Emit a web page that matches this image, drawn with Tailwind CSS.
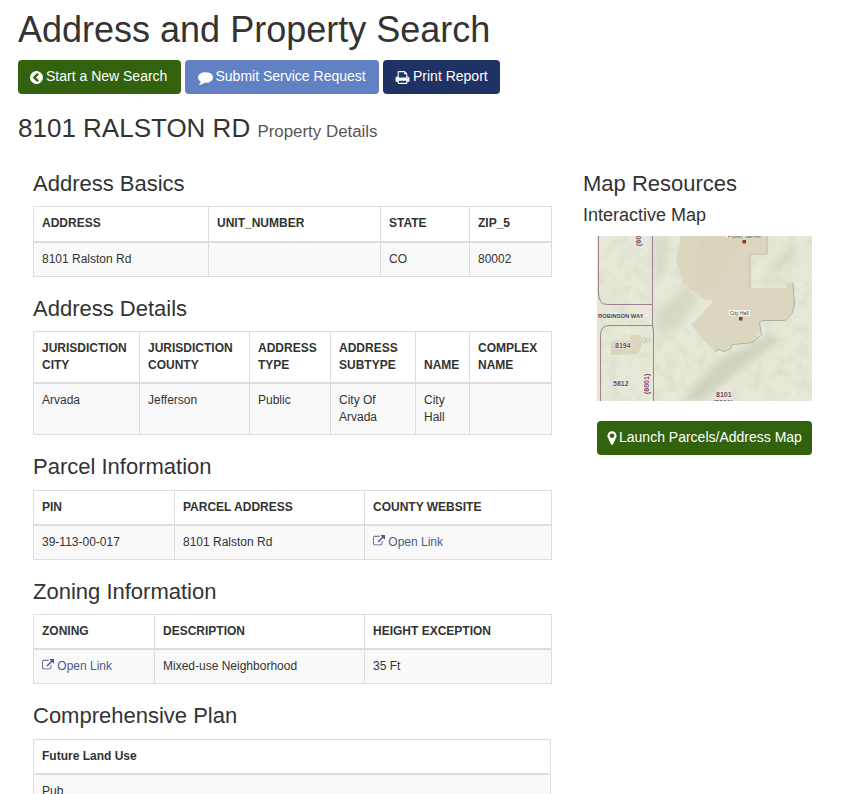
<!DOCTYPE html>
<html lang="en">
<head>
    <meta charset="UTF-8">
    <meta name="viewport" content="width=device-width, initial-scale=1.0">
    <title>Address and Property Search</title>
    <script src="https://cdn.jsdelivr.net/npm/@tailwindcss/browser@4"></script>
</head>
<body class="h-screen overflow-hidden bg-white font-['Liberation_Sans',Arial,sans-serif] text-sm leading-[1.42857] text-[#333]">
<div class="px-[18px]">
    <h1 class="pt-[10px] pb-[10px] text-[36px] leading-[39.6px] font-normal">Address and Property Search</h1>
    <div class="flex gap-1">
        <a class="flex h-[34px] w-[163px] items-center gap-[2px] rounded bg-[#33620f] pl-[13px] pt-px text-white">
            <svg class="-ml-[2px] w-[15px] h-[15px]" viewBox="0 0 1792 1792" fill="currentColor"><path d="M1037 1395l102-102q19-19 19-45t-19-45l-307-307 307-307q19-19 19-45t-19-45l-102-102q-19-19-45-19t-45 19l-454 454q-19 19-19 45t19 45l454 454q19 19 45 19t45-19zm627-499q0 209-103 385.500t-279.500 279.500-385.500 103-385.500-103-279.500-279.500-103-385.500 103-385.500 279.500-279.500 385.500-103 385.500 103 279.500 279.500 103 385.500z"/></svg>
            Start a New Search
        </a>
        <a class="flex h-[34px] w-[194px] items-center gap-[2.5px] rounded bg-[#6281c3] pl-[13px] pt-px text-white">
            <svg class="w-[15px] h-[15px]" viewBox="0 0 1792 1792" fill="currentColor"><path d="M1792 896q0 174-120 321.500t-326 233-450 85.500q-70 0-145-8-198 175-460 242-49 14-114 22-17 2-30.500-9t-17.500-29v-1q-3-4-.5-12t2-10 4.500-9.500l6-9 7-8.500 8-9q7-8 31-34.500t34.500-38 31-39.500 32.500-51 27-59 26-76q-157-89-247.500-220t-90.500-281q0-130 71-248.500t191-204.500 286-136.500 348-50.500q244 0 450 85.500t326 233 120 321.500z"/></svg>
            Submit Service Request
        </a>
        <a class="flex h-[34px] w-[117px] items-center gap-[3px] rounded bg-[#1f3264] pl-[13px] pt-px text-white">
            <svg class="-ml-px w-[15px] h-[15px]" viewBox="0 0 1792 1792" fill="currentColor"><path d="M448 1536h896v-256h-896v256zm0-640h896v-384h-160q-40 0-68-28t-28-68v-160h-640v640zm1152 64q0-26-19-45t-45-19-45 19-19 45 19 45 45 19 45-19 19-45zm128 0v416q0 13-9.500 22.500t-22.500 9.500h-224v160q0 40-28 68t-68 28h-960q-40 0-68-28t-28-68v-160h-224q-13 0-22.500-9.500t-9.500-22.500v-416q0-79 56.500-135.500t135.500-56.500h64v-544q0-40 28-68t68-28h672q40 0 88 20t76 48l152 152q28 28 48 76t20 88v256h64q79 0 135.500 56.500t56.500 135.500z"/></svg>
            Print Report
        </a>
    </div>
    <h2 class="mt-[19px] text-[26px] leading-[30px] font-normal">8101 RALSTON RD <small class="text-[16.9px] leading-none text-[#555]">Property Details</small></h2>

    <div class="mt-[9px] flex">
        <div class="w-[534px] pl-[15px] shrink-0">
            <h3 class="mt-5 mb-[10px] text-[22px] leading-[24.2px] font-normal">Address Basics</h3>
            <table class="w-[518px] table-fixed border-collapse text-xs leading-[17.14px] mb-5">
                <colgroup><col class="w-[175px]"><col class="w-[172px]"><col class="w-[89px]"><col class="w-[82px]"></colgroup>
                <thead class="bg-white text-left">
                    <tr>
                        <th class="border border-b-2 border-[#ddd] p-2 pb-[9px] align-bottom">ADDRESS</th>
                        <th class="border border-b-2 border-[#ddd] p-2 pb-[9px] align-bottom">UNIT_NUMBER</th>
                        <th class="border border-b-2 border-[#ddd] p-2 pb-[9px] align-bottom">STATE</th>
                        <th class="border border-b-2 border-[#ddd] p-2 pb-[9px] align-bottom">ZIP_5</th>
                    </tr>
                </thead>
                <tbody class="bg-[#f9f9f9]">
                    <tr>
                        <td class="border border-[#ddd] p-2 align-top">8101 Ralston Rd</td>
                        <td class="border border-[#ddd] p-2 align-top"></td>
                        <td class="border border-[#ddd] p-2 align-top">CO</td>
                        <td class="border border-[#ddd] p-2 align-top">80002</td>
                    </tr>
                </tbody>
            </table>

            <h3 class="mt-5 mb-[10px] text-[22px] leading-[24.2px] font-normal">Address Details</h3>
            <table class="w-[518px] table-fixed border-collapse text-xs leading-[17.14px] mb-5">
                <colgroup><col class="w-[106px]"><col class="w-[110px]"><col class="w-[81px]"><col class="w-[85px]"><col class="w-[54px]"><col class="w-[82px]"></colgroup>
                <thead class="bg-white text-left">
                    <tr>
                        <th class="border border-b-2 border-[#ddd] p-2 pb-[7px] align-bottom">JURISDICTION CITY</th>
                        <th class="border border-b-2 border-[#ddd] p-2 pb-[7px] align-bottom">JURISDICTION COUNTY</th>
                        <th class="border border-b-2 border-[#ddd] p-2 pb-[7px] align-bottom">ADDRESS TYPE</th>
                        <th class="border border-b-2 border-[#ddd] p-2 pb-[7px] align-bottom">ADDRESS SUBTYPE</th>
                        <th class="border border-b-2 border-[#ddd] p-2 pb-[7px] align-bottom">NAME</th>
                        <th class="border border-b-2 border-[#ddd] p-2 pb-[7px] align-bottom">COMPLEX NAME</th>
                    </tr>
                </thead>
                <tbody class="bg-[#f9f9f9]">
                    <tr>
                        <td class="border border-[#ddd] p-2 align-top">Arvada</td>
                        <td class="border border-[#ddd] p-2 align-top">Jefferson</td>
                        <td class="border border-[#ddd] p-2 align-top">Public</td>
                        <td class="border border-[#ddd] p-2 align-top">City Of Arvada</td>
                        <td class="border border-[#ddd] p-2 align-top">City Hall</td>
                        <td class="border border-[#ddd] p-2 align-top"></td>
                    </tr>
                </tbody>
            </table>

            <h3 class="mt-5 mb-[11px] text-[22px] leading-[24.2px] font-normal">Parcel Information</h3>
            <table class="w-[518px] table-fixed border-collapse text-xs leading-[17.14px] mb-5">
                <colgroup><col class="w-[141px]"><col class="w-[190px]"><col class="w-[187px]"></colgroup>
                <thead class="bg-white text-left">
                    <tr>
                        <th class="border border-b-2 border-[#ddd] p-2 align-bottom">PIN</th>
                        <th class="border border-b-2 border-[#ddd] p-2 align-bottom">PARCEL ADDRESS</th>
                        <th class="border border-b-2 border-[#ddd] p-2 align-bottom">COUNTY WEBSITE</th>
                    </tr>
                </thead>
                <tbody class="bg-[#f9f9f9]">
                    <tr>
                        <td class="border border-[#ddd] p-2 align-top">39-113-00-017</td>
                        <td class="border border-[#ddd] p-2 align-top">8101 Ralston Rd</td>
                        <td class="border border-[#ddd] p-2 align-top">
                            <a class="text-[#4d5c8a]"><svg class="inline-block w-3 h-3 align-[-1px]" viewBox="0 0 1792 1792" fill="currentColor"><path d="M1408 928v320q0 119-84.500 203.500t-203.500 84.500h-832q-119 0-203.500-84.500t-84.500-203.500v-832q0-119 84.500-203.500t203.500-84.500h704q14 0 23 9t9 23v64q0 14-9 23t-23 9h-704q-66 0-113 47t-47 113v832q0 66 47 113t113 47h832q66 0 113-47t47-113v-320q0-14 9-23t23-9h64q14 0 23 9t9 23zm384-864v512q0 26-19 45t-45 19-45-19l-176-176-652 652q-10 10-23 10t-23-10l-114-114q-10-10-10-23t10-23l652-652-176-176q-19-19-19-45t19-45 45-19h512q26 0 45 19t19 45z"/></svg> Open Link</a>
                        </td>
                    </tr>
                </tbody>
            </table>

            <h3 class="mt-5 mb-[9px] text-[22px] leading-[24.2px] font-normal">Zoning Information</h3>
            <table class="w-[518px] table-fixed border-collapse text-xs leading-[17.14px] mb-5">
                <colgroup><col class="w-[121px]"><col class="w-[210px]"><col class="w-[187px]"></colgroup>
                <thead class="bg-white text-left">
                    <tr>
                        <th class="border border-b-2 border-[#ddd] p-2 align-bottom">ZONING</th>
                        <th class="border border-b-2 border-[#ddd] p-2 align-bottom">DESCRIPTION</th>
                        <th class="border border-b-2 border-[#ddd] p-2 align-bottom">HEIGHT EXCEPTION</th>
                    </tr>
                </thead>
                <tbody class="bg-[#f9f9f9]">
                    <tr>
                        <td class="border border-[#ddd] p-2 align-top">
                            <a class="text-[#4d5c8a]"><svg class="inline-block w-3 h-3 align-[-1px]" viewBox="0 0 1792 1792" fill="currentColor"><path d="M1408 928v320q0 119-84.500 203.500t-203.500 84.500h-832q-119 0-203.500-84.500t-84.500-203.500v-832q0-119 84.500-203.500t203.500-84.500h704q14 0 23 9t9 23v64q0 14-9 23t-23 9h-704q-66 0-113 47t-47 113v832q0 66 47 113t113 47h832q66 0 113-47t47-113v-320q0-14 9-23t23-9h64q14 0 23 9t9 23zm384-864v512q0 26-19 45t-45 19-45-19l-176-176-652 652q-10 10-23 10t-23-10l-114-114q-10-10-10-23t10-23l652-652-176-176q-19-19-19-45t19-45 45-19h512q26 0 45 19t19 45z"/></svg> Open Link</a>
                        </td>
                        <td class="border border-[#ddd] p-2 align-top">Mixed-use Neighborhood</td>
                        <td class="border border-[#ddd] p-2 align-top">35 Ft</td>
                    </tr>
                </tbody>
            </table>

            <h3 class="mt-5 mb-[11px] text-[22px] leading-[24.2px] font-normal">Comprehensive Plan</h3>
            <table class="w-[518px] table-fixed border-collapse text-xs leading-[17.14px] mb-5">
                <thead class="bg-white text-left">
                    <tr><th class="border border-b-2 border-[#ddd] p-2 align-bottom">Future Land Use</th></tr>
                </thead>
                <tbody class="bg-[#f9f9f9]">
                    <tr><td class="border border-[#ddd] p-2 align-top">Pub</td></tr>
                </tbody>
            </table>
        </div>

        <div class="ml-[31px] w-[229px] shrink-0">
            <h3 class="mt-5 mb-[9px] text-[22px] leading-[24.2px] font-normal">Map Resources</h3>
            <h4 class="mb-[11px] text-lg leading-[20px] font-normal">Interactive Map</h4>
            <div class="ml-[14px] w-[215px]">
                <svg class="block w-[215px] h-[165px]" viewBox="0 0 215 165" font-family="Liberation Sans, Arial, sans-serif">
                    <defs>
                        <filter id="soft" x="-20%" y="-20%" width="140%" height="140%"><feGaussianBlur stdDeviation="3"/></filter>
                        <filter id="softer" x="-20%" y="-20%" width="140%" height="140%"><feGaussianBlur stdDeviation="0.5"/></filter>
                        <filter id="mottle" x="0" y="0" width="100%" height="100%">
                            <feTurbulence type="fractalNoise" baseFrequency="0.09" numOctaves="3" seed="4"/>
                            <feColorMatrix values="0 0 0 0 0.66 0 0 0 0 0.67 0 0 0 0 0.54 0 0 0 1 -0.4"/>
                        </filter>
                    </defs>
                    <rect width="215" height="165" fill="#e6e8d8"/>
                    <rect width="215" height="165" filter="url(#mottle)"/>
                    <g filter="url(#soft)">
                        <polygon points="56,0 72,0 70,30 58,50" fill="#d8dbc6"/>
                        <polygon points="60,75 90,50 100,65 80,90 62,100" fill="#d6d9c4"/>
                        <polygon points="84,165 120,125 175,98 182,104 135,140 105,165" fill="#d0d4be"/>
                        <polygon points="175,30 195,8 200,14 182,36" fill="#d4d8c3"/>
                        <polygon points="160,45 190,40 188,46 165,50" fill="#d9dcc8"/>
                    </g>
                    <polygon points="83,0 170,0 170,17 153,17 153,52 189,52 190,47 196,47 197,68 195,77 192,77 192,80 188,80 188,84 165,84 162,87 164,98 160,98 160,102 156,102 156,106 152,106 147,107 135,108 134,112 130,112 127,115 122,113 118,115 107,104 93,87 114,66 105,62 86,47 79,24 83,7" fill="#dbd6bf"/>
                    <polyline points="170,0 170,18 153,18 153,52" fill="none" stroke="#b8b9a8" stroke-width="1" filter="url(#softer)"/>
                    <polyline points="196,47 197.500,68 195,77.500 192,80 188,84.500 165,84.500 162.500,87 164.500,98.500 160,102 156,106.500 147,107.500 135,108.500 134,112.500 127,115.500 122,113.500 118,115.500" fill="none" stroke="#aeaf9f" stroke-width="1" filter="url(#softer)"/>
                    <polygon points="90,86 113,63 116,66 94,89" fill="#e7e8d8"/>
                    <polygon points="103,0 148,0 112,56 102,50" fill="#d8d3ba" filter="url(#soft)"/>
                    <path d="M1.500 0V56Q1.500 68.500 10 68.500H55.500M55.500 0V89.500M55.500 89.500L56.500 95V165M55.500 89.500H12Q3.500 89.500 3.500 100V165" fill="none" stroke="#8d6680" stroke-width="0.8"/>
                    <line x1="44" y1="79.500" x2="52" y2="79.500" stroke="#fff" stroke-width="1"/>
                    <text x="1" y="81.500" font-size="5.800" font-weight="bold" fill="#4a3c48" stroke="#f3f3ea" stroke-width="1" paint-order="stroke">ROBINSON WAY</text>
                    <polygon points="14,105 33,105 33,99 44,99 44,112 40,118 14,119" fill="#dbd5bb"/>
                    <circle cx="47" cy="104" r="2" fill="none" stroke="#bdbca6" stroke-width="0.6"/>
                    <circle cx="51" cy="104" r="2" fill="none" stroke="#bdbca6" stroke-width="0.6"/>
                    <text x="18" y="111.500" font-size="7" font-weight="bold" fill="#74425f" stroke="#f3f1e6" stroke-width="1.500" paint-order="stroke">8194</text>
                    <text x="16" y="149.500" font-size="7" font-weight="bold" fill="#74425f" stroke="#f3f1e6" stroke-width="1.500" paint-order="stroke">5812</text>
                    <text transform="translate(52 158) rotate(-90)" font-size="7" font-weight="bold" fill="#74425f" stroke="#f3f1e6" stroke-width="1.500" paint-order="stroke">(8001)</text>
                    <text transform="translate(44 10) rotate(-90)" font-size="7" font-weight="bold" fill="#74425f" stroke="#f3f1e6" stroke-width="1.500" paint-order="stroke">(80</text>
                    <text x="119" y="161" font-size="7" font-weight="bold" fill="#74425f" stroke="#f3f1e6" stroke-width="1.500" paint-order="stroke">8101</text>
                    <text x="116" y="168.500" font-size="7" font-weight="bold" fill="#74425f" stroke="#f3f1e6" stroke-width="1.500" paint-order="stroke">(8001)</text>
                    <rect x="132" y="74" width="21" height="6" fill="#f4f3ea"/>
                    <text x="133" y="79" font-size="5" fill="#4a4038">City Hall</text>
                    <rect x="142" y="81" width="3.500" height="3.500" fill="#8b3f1c"/>
                    <rect x="130" y="-2" width="33" height="4" fill="#f4f3ea"/>
                    <text x="131" y="2" font-size="5" fill="#4a4038">Pickett Games</text>
                    <rect x="145.500" y="4" width="3.500" height="3.500" fill="#8b3f1c"/>
                </svg>
                <a class="mt-5 flex h-[34px] items-center rounded bg-[#33620f] pl-[7px] pt-px text-white">
                    <svg class="w-4 h-4 -mr-px" viewBox="0 0 1792 1792" fill="currentColor"><path d="M1152 640q0-106-75-181t-181-75-181 75-75 181 75 181 181 75 181-75 75-181zm256 0q0 109-33 179l-364 774q-16 33-47.500 52t-67.500 19-67.500-19-46.500-52l-365-774q-33-70-33-179 0-212 150-362t362-150 362 150 150 362z"/></svg>
                    Launch Parcels/Address Map
                </a>
            </div>
        </div>
    </div>
</div>
</body>
</html>
